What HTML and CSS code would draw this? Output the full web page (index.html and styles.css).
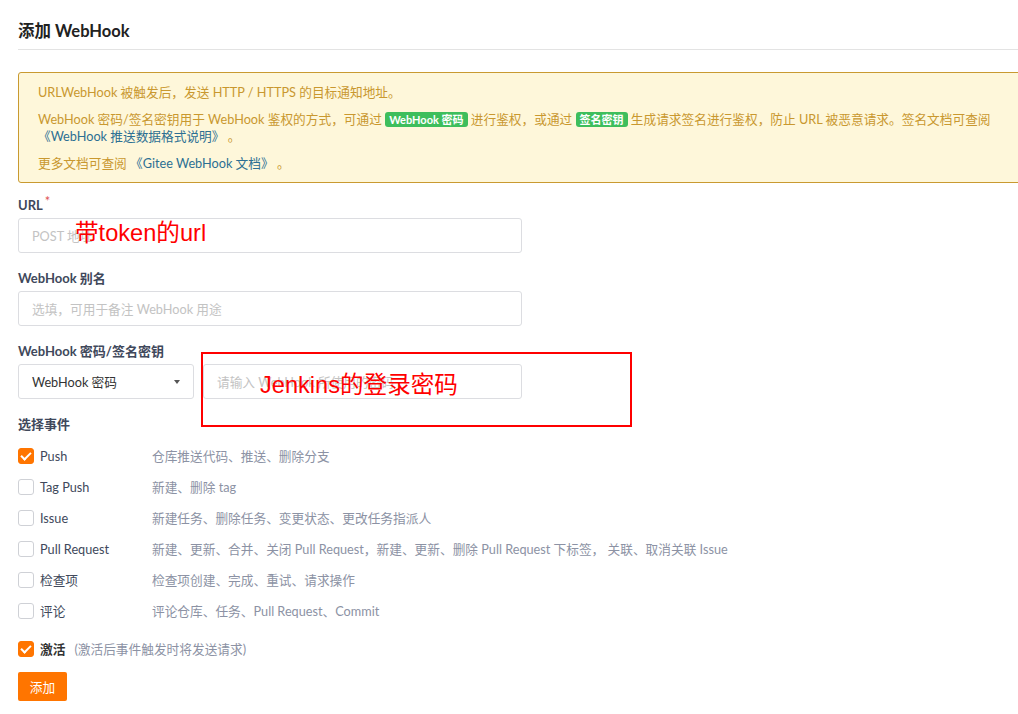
FILE: index.html
```html
<!DOCTYPE html>
<html lang="zh-CN">
<head>
  <meta charset="UTF-8" />
  <title>添加 WebHook</title>
  <link rel="stylesheet" href="styles.css">
</head>
<body>
  <div class="page">
    <h3 class="page-title">添加 WebHook</h3>

    <!-- tips -->
    <div class="tips">
      <p>URLWebHook 被触发后，发送 HTTP / HTTPS 的目标通知地址。</p>
      <p><span class="nowrap">WebHook 密码/签名密钥用于 WebHook 鉴权的方式，可通过 <span class="badge">WebHook 密码</span> 进行鉴权，或通过 <span class="badge">签名密钥</span> 生成请求签名进行鉴权，防止 URL 被恶意请求。签名文档可查阅</span><br><a href="#">《WebHook 推送数据格式说明》</a> 。</p>
      <p>更多文档可查阅 <a href="#">《Gitee WebHook 文档》</a> 。</p>
    </div>

    <div class="field field-first">
      <label class="field-label">URL<span class="required">*</span></label>
      <div class="note-wrap">
        <input class="text-input" type="text" placeholder="POST 地址">
        <span class="note note-url">带token的url</span>
      </div>
    </div>

    <div class="field">
      <label class="field-label">WebHook 别名</label>
      <input class="text-input" type="text" placeholder="选填，可用于备注 WebHook 用途">
    </div>

    <div class="field">
      <label class="field-label">WebHook 密码/签名密钥</label>
      <div class="secret-row">
        <div class="select">WebHook 密码<span class="caret"></span></div>
        <input class="text-input secret-input" type="text" placeholder="请输入 WebHook 所使用的密码">
        <div class="note-box"><span class="note">Jenkins的登录密码</span></div>
      </div>
    </div>

    <div class="field events">
      <label class="field-label">选择事件</label>
      <div class="event-row">
        <span class="checkbox checked"></span><span class="event-name">Push</span>
        <span class="event-desc">仓库推送代码、推送、删除分支</span>
      </div>
      <div class="event-row">
        <span class="checkbox"></span><span class="event-name">Tag Push</span>
        <span class="event-desc">新建、删除 tag</span>
      </div>
      <div class="event-row">
        <span class="checkbox"></span><span class="event-name">Issue</span>
        <span class="event-desc">新建任务、删除任务、变更状态、更改任务指派人</span>
      </div>
      <div class="event-row">
        <span class="checkbox"></span><span class="event-name">Pull Request</span>
        <span class="event-desc">新建、更新、合并、关闭 Pull Request，新建、更新、删除 Pull Request 下标签， 关联、取消关联 Issue</span>
      </div>
      <div class="event-row">
        <span class="checkbox"></span><span class="event-name">检查项</span>
        <span class="event-desc">检查项创建、完成、重试、请求操作</span>
      </div>
      <div class="event-row">
        <span class="checkbox"></span><span class="event-name">评论</span>
        <span class="event-desc">评论仓库、任务、Pull Request、Commit</span>
      </div>
    </div>

    <div class="active-row">
      <span class="checkbox checked"></span><span class="active-name">激活</span>
      <span class="active-desc">(激活后事件触发时将发送请求)</span>
    </div>

    <button class="btn-add">添加</button>
  </div>
</body>
</html>
```

FILE: styles.css
```css
* {
  box-sizing: border-box;
}

body {
  margin: 0;
  font-family: Lato, "Noto Sans CJK SC", sans-serif;
  font-size: 12.7px;
  color: #40485b;
  background: #fff;
  overflow: hidden;
}

.page {
  padding: 18px 0 0 18px;
}

.page-title {
  margin: 0;
  font-size: 16.5px;
  font-weight: 700;
  color: #222;
  line-height: 26px;
  padding-bottom: 5px;
  border-bottom: 1px solid #e3e3e3;
}

/* tips box */
.tips {
  margin: 22px -12px 0 0;
  padding: 8px 20px 8px 19px;
  background: #fef7da;
  border: 1px solid #c99a30;
  border-radius: 3px;
  color: #c9982f;
  line-height: 17px;
}

.tips p {
  margin: 3px 0 10px;
}

.tips p:last-child {
  margin-bottom: 2px;
}

.tips a {
  color: #2c6f93;
  text-decoration: none;
}

.nowrap {
  white-space: nowrap;
}

.badge {
  display: inline-block;
  background: #3ebe5c;
  color: #fff;
  font-size: 11px;
  font-weight: 700;
  line-height: 15px;
  padding: 0 4px;
  border-radius: 3px;
}

/* fields */
.field {
  margin-top: 17px;
  width: 504px;
}

.field-first {
  margin-top: 14px;
}

.field-label {
  display: block;
  font-weight: 700;
  font-size: 13px;
  line-height: 17px;
  margin-bottom: 4px;
}

.required {
  color: #e05252;
  font-weight: 400;
  vertical-align: top;
  position: relative;
  top: -4px;
  margin-left: 2px;
}

.text-input {
  display: block;
  width: 100%;
  height: 35px;
  border: 1px solid #dcdde1;
  border-radius: 3px;
  padding: 0 13px;
  font-family: inherit;
  font-size: 12.7px;
  color: #333;
  outline: none;
}

.text-input::placeholder {
  color: #c3c3c3;
}

.note-wrap {
  position: relative;
}

.note {
  font-family: "Liberation Sans", "Noto Sans CJK SC", sans-serif;
  font-size: 23.6px;
  color: #ff0000;
  white-space: nowrap;
}

.note-url {
  position: absolute;
  left: 57px;
  top: -4px;
}

.secret-row {
  display: flex;
  gap: 9px;
  position: relative;
}

.select {
  flex: 0 0 176px;
  height: 35px;
  border: 1px solid #dcdde1;
  border-radius: 3px;
  padding: 0 13px;
  display: flex;
  align-items: center;
  justify-content: space-between;
  color: #333;
}

.caret {
  width: 0;
  height: 0;
  border-left: 3px solid transparent;
  border-right: 3px solid transparent;
  border-top: 4px solid #555;
}

.secret-input {
  flex: 1;
}

.note-box {
  position: absolute;
  left: 183px;
  top: -12px;
  width: 431px;
  height: 75px;
  border: 2px solid #f00;
  padding: 12px 0 0 57px;
}

/* events */
.events {
  margin-top: 17px;
}

.events .field-label {
  margin-bottom: 7px;
}

.event-row,
.active-row {
  display: flex;
  align-items: center;
  height: 31px;
  white-space: nowrap;
}

.checkbox {
  width: 16px;
  height: 16px;
  border: 1px solid #cfd1d6;
  border-radius: 3px;
  background: #fff;
  flex: 0 0 16px;
  position: relative;
}

.checkbox.checked {
  background: #ff7500;
  border-color: #ff7500;
}

.checkbox.checked::after {
  content: "";
  position: absolute;
  left: 4px;
  top: 1px;
  width: 4px;
  height: 8px;
  border-right: 2.5px solid #fff;
  border-bottom: 2.5px solid #fff;
  transform: rotate(45deg);
}

.event-name {
  flex: 0 0 118px;
  padding-left: 6px;
  color: #40485b;
}

.event-desc {
  color: #8c92a4;
}

.active-row {
  margin-top: 7px;
}

.active-name {
  padding-left: 6px;
  font-weight: 700;
  color: #333;
}

.active-desc {
  padding-left: 9px;
  color: #8c92a4;
}

.btn-add {
  margin-top: 8px;
  width: 49px;
  height: 29px;
  background: #ff7500;
  border: none;
  border-radius: 2px;
  color: #fff;
  font-family: inherit;
  font-size: 12.7px;
  padding: 0;
}
```
